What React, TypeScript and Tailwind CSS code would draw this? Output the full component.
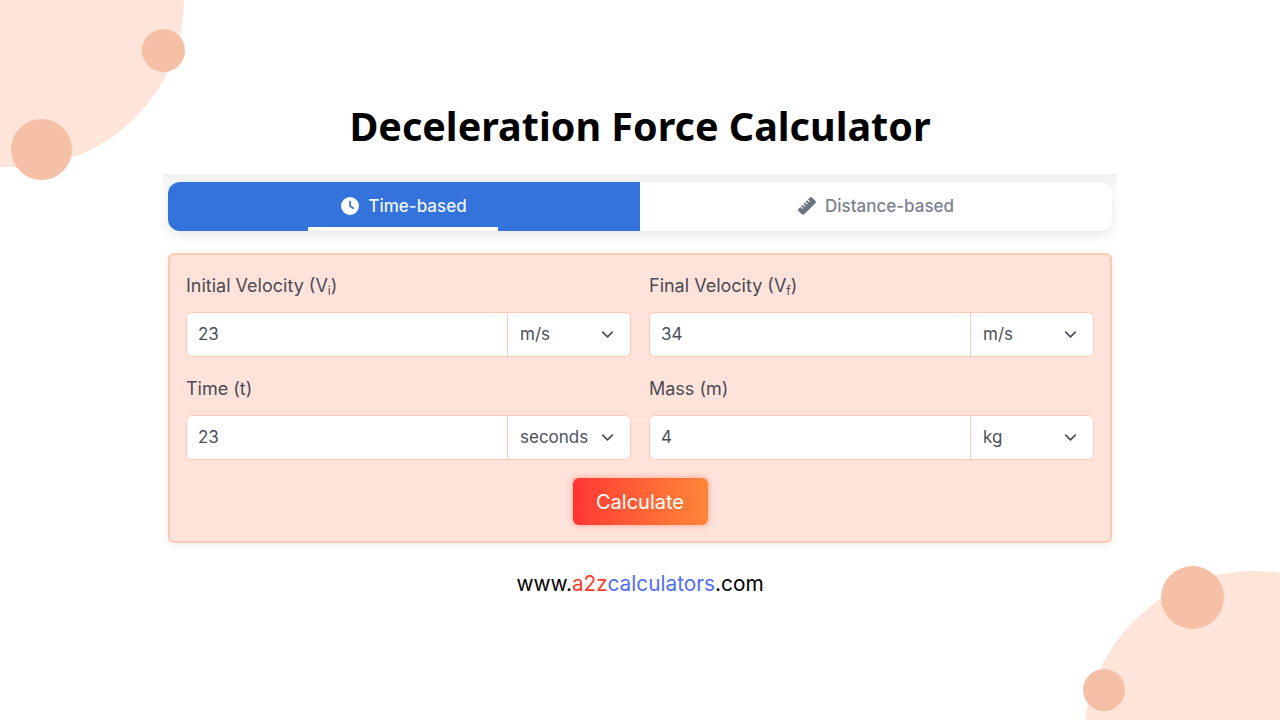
import { ChevronDown } from 'lucide-react';
import { FaClock, FaRuler } from 'react-icons/fa6';

function Field({ label, sub, value, unit }: { label: string; sub?: string; value: string; unit: string }) {
  return (
    <div>
      <label className="block h-[24px] pt-[1px] text-[18px] leading-[24px] text-[#4a4a55]">
        {label}
        {sub && <sub className="text-[12px] text-[#4a4a55]">{sub}</sub>}
        {sub && ')'}
      </label>
      <div className="mt-[15px] flex h-[45px] rounded-md border border-[#ffc9b5] bg-white">
        <input
          readOnly
          value={value}
          className="w-[321px] border-r border-[#ffc9b5] bg-transparent pl-[11px] text-[17px] text-[#4b4f5c] outline-none"
        />
        <div className="flex flex-1 items-center justify-between pl-[12px] pr-[13px] text-[17px] text-[#4b4f5c]">
          <span>{unit}</span>
          <ChevronDown className="h-[19px] w-[19px]" strokeWidth={2.2} />
        </div>
      </div>
    </div>
  );
}

export default function App() {
  return (
    <div className="relative h-[720px] w-[1280px] overflow-hidden bg-white font-['Inter',sans-serif]">
      {/* corner decoration */}
      <div className="absolute left-[-184px] top-[-167px] h-[334px] w-[368px] rounded-full bg-[#ffe4d9]" />
      <div className="absolute left-[142px] top-[29px] h-[43px] w-[43px] rounded-full bg-[#f5c0a6]" />
      <div className="absolute left-[11px] top-[119px] h-[61px] w-[61px] rounded-full bg-[#f5c0a6]" />
      <div className="absolute left-[1084px] top-[571px] h-[340px] w-[340px] rounded-full bg-[#ffe4d9]" />
      <div className="absolute left-[1161px] top-[566px] h-[63px] w-[63px] rounded-full bg-[#f5c0a6]" />
      <div className="absolute left-[1083px] top-[669px] h-[42px] w-[42px] rounded-full bg-[#f5c0a6]" />

      <div className="relative mx-auto w-[954px] pt-[98px]">
        <h1 className="text-center font-['Noto_Sans',sans-serif] text-[39.5px] font-bold leading-[56px] text-black">
          Deceleration Force Calculator
        </h1>

        <div className="mt-[20px] bg-gradient-to-b from-[#f0f0f0] to-white to-[5%] px-[5px] pt-[8px]">
          <div className="flex h-[49px] rounded-xl bg-white shadow-[0_4px_12px_rgba(0,0,0,0.1)]">
            <div className="relative flex w-[472px] items-center justify-center gap-[9px] rounded-l-xl bg-[#3373db] text-[17px] font-[550] text-white/95">
              <FaClock className="mt-[-1px] h-[18px] w-[18px] text-white" />
              <span>Time-based</span>
              <div className="absolute bottom-0 left-[140px] h-[4px] w-[190px] bg-white" />
            </div>
            <div className="flex flex-1 items-center justify-center gap-[9px] text-[17px] font-[550] text-[#7a8290]">
              <FaRuler className="mt-[-1px] h-[18px] w-[18px] text-[#6b7280]" />
              <span>Distance-based</span>
            </div>
          </div>

          <div className="mt-[22px] h-[290px] rounded-md border-2 border-[#ffc9b5] bg-[#ffe3da] px-[16px] pt-[18px] shadow-[0_2px_6px_rgba(0,0,0,0.08)]">
            <div className="grid grid-cols-2 gap-x-[18px] gap-y-[19px]">
              <Field label="Initial Velocity (V" sub="i" value="23" unit="m/s" />
              <Field label="Final Velocity (V" sub="f" value="34" unit="m/s" />
              <Field label="Time (t)" value="23" unit="seconds" />
              <Field label="Mass (m)" value="4" unit="kg" />
            </div>
            <div className="mt-[18px] flex justify-center">
              <button className="h-[47px] w-[135px] rounded-md bg-gradient-to-r from-[#ff3333] to-[#ff8438] text-[20px] text-white shadow-[0_0_4px_2px_rgba(255,140,120,0.45)]">
                Calculate
              </button>
            </div>
          </div>
        </div>

        <p className="mt-[26px] text-center font-['Inter',sans-serif] text-[20.8px] leading-[29px] text-black">
          www.<span className="text-[#ff3b30]">a2z</span>
          <span className="text-[#4f6ef7]">calculators</span>.com
        </p>
      </div>
    </div>
  );
}
